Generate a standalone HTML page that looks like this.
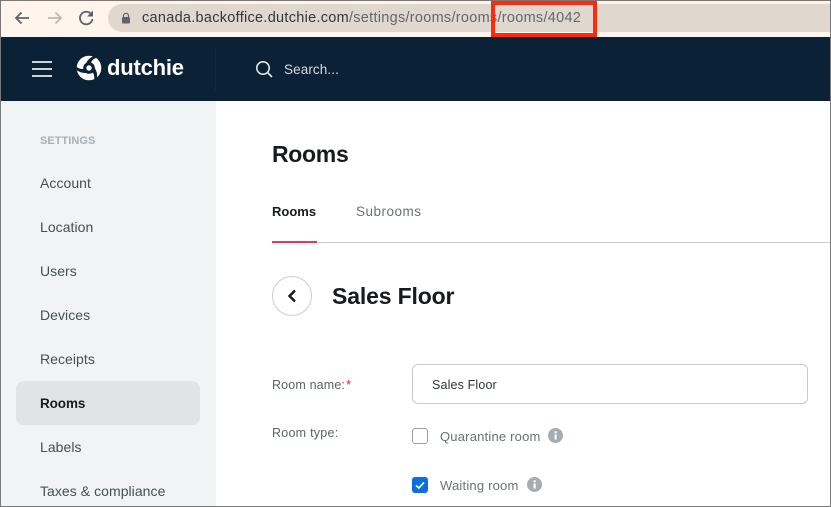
<!DOCTYPE html>
<html><head><meta charset="utf-8"><style>
html,body{margin:0;padding:0;background:#fff}
#p{position:relative;width:831px;height:507px;overflow:hidden;background:#fff;font-family:"Liberation Sans",sans-serif}
#p div,#p svg{position:absolute}
.t{white-space:nowrap;line-height:16px}
.n{left:40px;font-size:14px;color:#464f53;letter-spacing:.05px}
</style></head><body><div id="p">
<div style="left:0;top:0;width:831px;height:37px;background:#fff5ec"></div>
<div style="left:108px;top:4px;width:723px;height:28px;background:#e0d8cf;border-radius:14px 0 0 14px"></div>
<svg style="left:0;top:0" width="110" height="37" fill="none">
<path d="M29 18H16M21.500 12.500L16 18l5.500 5.500" stroke="#5f6266" stroke-width="1.800"/>
<path d="M48 18H61M55.500 12.500L61 18l-5.500 5.500" stroke="#bdb9b5" stroke-width="1.800"/>
<path d="M91.500 14.500A6.300 6.300 0 1 0 92.500 19" stroke="#5f6266" stroke-width="1.800"/>
<path d="M93 10.500v6h-6z" fill="#5f6266"/>
</svg>
<svg style="left:120px;top:12px" width="13" height="13"><path d="M3.500 5V3.800a2.500 2.500 0 0 1 5 0V5" fill="none" stroke="#5f6266" stroke-width="1.200"/><rect x="2" y="5" width="8" height="6.500" rx="1" fill="#5f6266"/></svg>
<div class="t" style="left:142px;top:10px;font-size:14.500px;color:#35363a;letter-spacing:.28px">canada.backoffice.dutchie.com<span style="color:#66676a">/settings/rooms/rooms/rooms/4042</span></div>
<div style="left:491px;top:1px;width:98px;height:28px;border:4px solid #ff2a0e"></div>
<div style="left:0;top:37px;width:831px;height:64px;background:#0a2136"></div>
<div style="left:32px;top:61px;width:20px;height:2px;background:#cdd3d7"></div>
<div style="left:32px;top:68px;width:20px;height:2px;background:#cdd3d7"></div>
<div style="left:32px;top:75px;width:20px;height:2px;background:#cdd3d7"></div>
<svg style="left:76px;top:55px" width="26" height="26" viewBox="-13 -13 26 26">
<circle r="12.300" fill="#fff"/>
<circle r="5.800" fill="#0a2136"/>
<g fill="#0a2136">
<path d="M-3 -4.500C-1 -9 2 -11 7 -13L9 -11C4 -9 2 -7 2 -4Z"/>
<path transform="rotate(120)" d="M-3 -4.500C-1 -9 2 -11 7 -13L9 -11C4 -9 2 -7 2 -4Z"/>
<path transform="rotate(240)" d="M-3 -4.500C-1 -9 2 -11 7 -13L9 -11C4 -9 2 -7 2 -4Z"/>
</g>
<circle r="2.700" fill="#fff"/>
</svg>
<div class="t" style="left:107px;top:54px;font-size:22px;line-height:28px;font-weight:bold;color:#fff;letter-spacing:-.2px">dutchie</div>
<div style="left:215px;top:48px;width:1px;height:43px;background:#16293b"></div>
<svg style="left:255px;top:60px" width="18" height="18" fill="none" stroke="#e4e7e9" stroke-width="1.600"><circle cx="8" cy="8" r="6.200"/><path d="M12.500 12.500L17 17"/></svg>
<div class="t" style="left:284px;top:62px;font-size:13.500px;color:#d5dade;letter-spacing:.1px">Search...</div>
<div style="left:0;top:101px;width:216px;height:406px;background:#f1f3f5"></div>
<div style="left:16px;top:381px;width:184px;height:44px;background:#e1e4e6;border-radius:8px"></div>
<div class="t" style="left:40px;top:133px;font-size:11px;font-weight:bold;color:#a9b0b4;letter-spacing:.05px">SETTINGS</div>
<div class="t n" style="top:175px">Account</div>
<div class="t n" style="top:219px">Location</div>
<div class="t n" style="top:263px">Users</div>
<div class="t n" style="top:307px">Devices</div>
<div class="t n" style="top:351px">Receipts</div>
<div class="t n" style="top:396px;font-size:13.500px;font-weight:bold;color:#171b1d;letter-spacing:-.1px">Rooms</div>
<div class="t n" style="top:439px">Labels</div>
<div class="t n" style="top:483px">Taxes &amp; compliance</div>
<div class="t" style="left:272px;top:140px;font-size:23px;line-height:28px;font-weight:bold;color:#171b1d;letter-spacing:-.3px">Rooms</div>
<div class="t" style="left:272px;top:204px;font-size:13px;font-weight:bold;color:#171b1d">Rooms</div>
<div class="t" style="left:356px;top:204px;font-size:13.500px;color:#6a7377;letter-spacing:.5px">Subrooms</div>
<div style="left:272px;top:242px;width:559px;height:1px;background:#cbcfd1"></div>
<div style="left:272px;top:241px;width:45px;height:2px;background:#f0364f"></div>
<div style="left:272px;top:276px;width:38px;height:38px;border:1px solid #c9cdcf;border-radius:50%"></div>
<svg style="left:286px;top:288px" width="12" height="16" fill="none" stroke="#171b1d" stroke-width="2.400"><path d="M9 2.500L3.500 8 9 13.500"/></svg>
<div class="t" style="left:332px;top:282px;font-size:23px;line-height:28px;font-weight:bold;color:#171b1d;letter-spacing:-.15px">Sales Floor</div>
<div class="t" style="left:272px;top:377px;font-size:12.500px;color:#5a6367;letter-spacing:.15px">Room name:<span style="color:#f0203a;margin-left:1px">*</span></div>
<div style="left:412px;top:364px;width:394px;height:38px;border:1px solid #c6cacc;border-radius:6px"></div>
<div class="t" style="left:432px;top:377px;font-size:12.500px;color:#2e3538;letter-spacing:.15px">Sales Floor</div>
<div class="t" style="left:272px;top:425px;font-size:12.500px;color:#5a6367;letter-spacing:.25px">Room type:</div>
<div style="left:412px;top:428px;width:14px;height:14px;border:1px solid #9aa0a3;border-radius:3px"></div>
<div class="t" style="left:440px;top:429px;font-size:13px;color:#6a7377;letter-spacing:.2px">Quarantine room</div>
<svg style="left:548px;top:428px" width="15" height="15"><circle cx="7.500" cy="7.500" r="7.500" fill="#a6adb1"/><rect x="6.500" y="6.500" width="2.200" height="5" fill="#fff"/><rect x="6.500" y="3.300" width="2.200" height="2" fill="#fff"/></svg>
<div style="left:412px;top:477px;width:16px;height:16px;background:#0b6fe0;border-radius:3px"></div>
<svg style="left:412px;top:477px" width="16" height="16" fill="none" stroke="#fff" stroke-width="1.700"><path d="M4 8.500L6.800 11 12 5.500"/></svg>
<div class="t" style="left:440px;top:478px;font-size:13px;color:#6a7377;letter-spacing:.2px">Waiting room</div>
<svg style="left:527px;top:477px" width="15" height="15"><circle cx="7.500" cy="7.500" r="7.500" fill="#a6adb1"/><rect x="6.500" y="6.500" width="2.200" height="5" fill="#fff"/><rect x="6.500" y="3.300" width="2.200" height="2" fill="#fff"/></svg>
<div style="left:0;top:0;width:831px;height:1px;background:#7d7873"></div>
<div style="left:0;top:0;width:1px;height:507px;background:#77787a"></div>
<div style="left:830px;top:0;width:1px;height:507px;background:#77787a"></div>
<div style="left:0;top:506px;width:831px;height:1px;background:#77787a"></div>
</div></body></html>
